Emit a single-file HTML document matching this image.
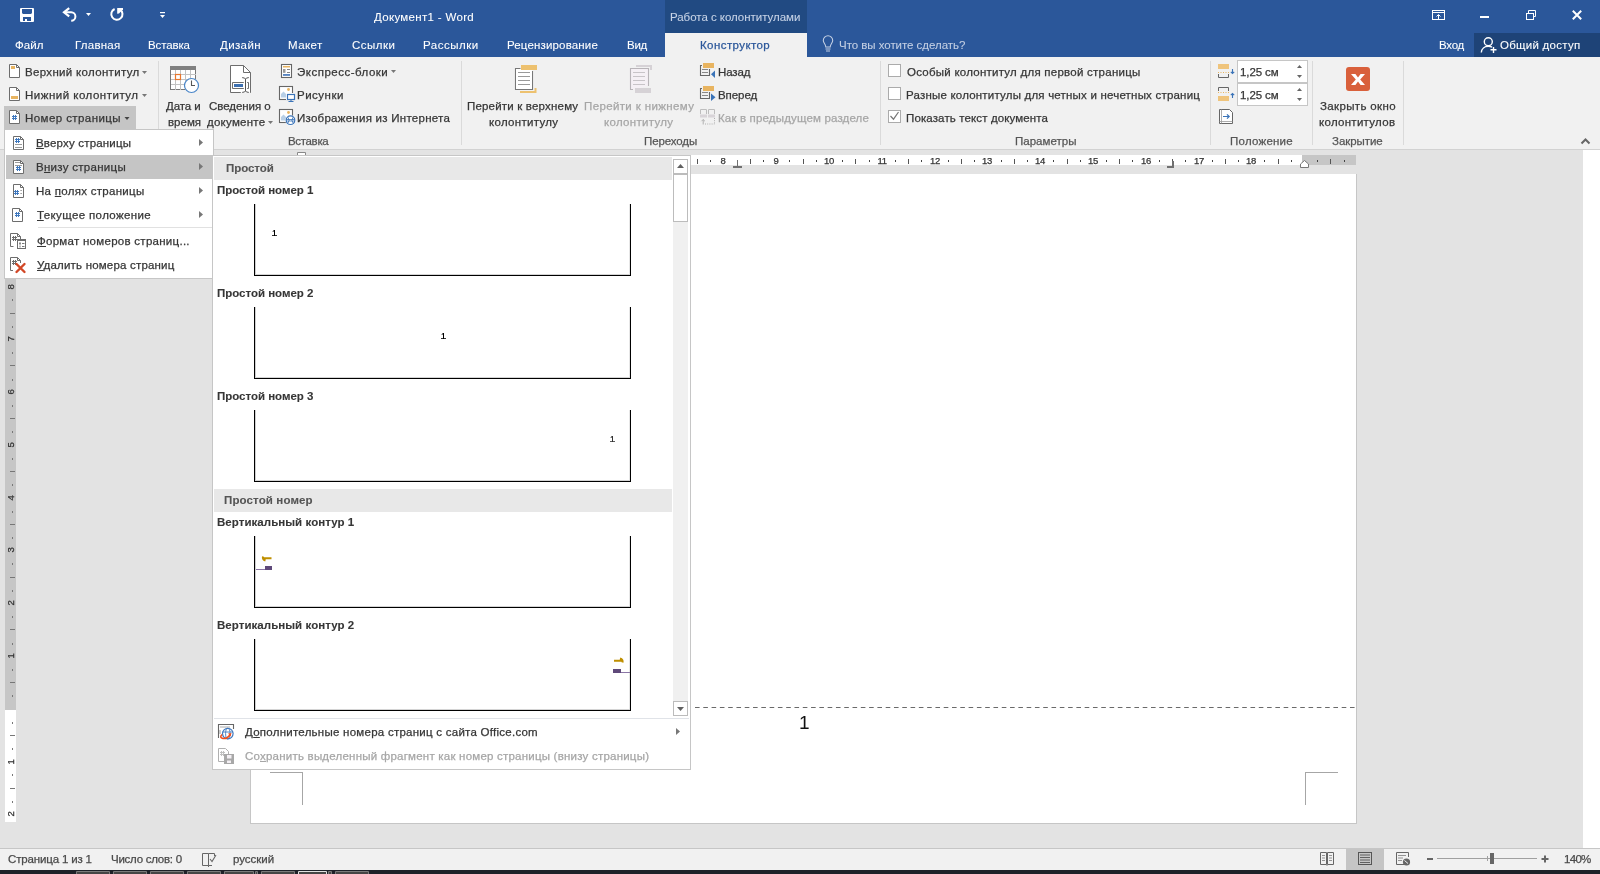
<!DOCTYPE html>
<html><head><meta charset="utf-8"><title>Word</title>
<style>
html,body{margin:0;padding:0;width:1600px;height:874px;overflow:hidden;background:#e3e3e3;}
body{position:relative;font-family:"Liberation Sans",sans-serif;}
.t{position:absolute;white-space:nowrap;font-family:"Liberation Sans",sans-serif;will-change:transform;-webkit-text-stroke:0.25px currentColor;}
.r{position:absolute;display:block;}
u{text-decoration:underline;text-underline-offset:1px;}
</style></head><body>
<div class="r" style="left:0px;top:0px;width:1600px;height:57px;background:#2b579a;"></div>
<div class="r" style="left:665px;top:0px;width:142px;height:33px;background:#214a82;"></div>
<div class="r" style="left:665px;top:33px;width:142px;height:24px;background:#f1f1f1;"></div>
<div class="r" style="left:1474px;top:33px;width:126px;height:24px;background:#1e4377;"></div>
<div class="t" style="left:374px;top:10.0px;color:#fff;font-size:11.5px;line-height:14px;letter-spacing:0.32px;-webkit-text-stroke:0.08px currentColor;">Документ1 - Word</div>
<div class="t" style="left:670.4px;top:10.0px;color:#c7d3e6;font-size:11.5px;line-height:14px;letter-spacing:-0.033px;-webkit-text-stroke:0.08px currentColor;">Работа с колонтитулами</div>
<div class="t" style="left:15.25px;top:38.0px;color:#fff;font-size:11.5px;line-height:14px;letter-spacing:0.083px;-webkit-text-stroke:0.08px currentColor;">Файл</div>
<div class="t" style="left:75px;top:38.0px;color:#fff;font-size:11.5px;line-height:14px;letter-spacing:0.233px;-webkit-text-stroke:0.08px currentColor;">Главная</div>
<div class="t" style="left:148.4px;top:38.0px;color:#fff;font-size:11.5px;line-height:14px;letter-spacing:-0.133px;-webkit-text-stroke:0.08px currentColor;">Вставка</div>
<div class="t" style="left:219.7px;top:38.0px;color:#fff;font-size:11.5px;line-height:14px;letter-spacing:0.38px;-webkit-text-stroke:0.08px currentColor;">Дизайн</div>
<div class="t" style="left:288px;top:38.0px;color:#fff;font-size:11.5px;line-height:14px;letter-spacing:0.45px;-webkit-text-stroke:0.08px currentColor;">Макет</div>
<div class="t" style="left:352px;top:38.0px;color:#fff;font-size:11.5px;line-height:14px;letter-spacing:0.5px;-webkit-text-stroke:0.08px currentColor;">Ссылки</div>
<div class="t" style="left:423px;top:38.0px;color:#fff;font-size:11.5px;line-height:14px;letter-spacing:0.5px;-webkit-text-stroke:0.08px currentColor;">Рассылки</div>
<div class="t" style="left:506.6px;top:38.0px;color:#fff;font-size:11.5px;line-height:14px;letter-spacing:0.154px;-webkit-text-stroke:0.08px currentColor;">Рецензирование</div>
<div class="t" style="left:626.9px;top:38.0px;color:#fff;font-size:11.5px;line-height:14px;letter-spacing:-0.25px;-webkit-text-stroke:0.08px currentColor;">Вид</div>
<div class="t" style="left:699.6px;top:38.0px;color:#2b579a;font-size:11.5px;line-height:14px;letter-spacing:0.42px;">Конструктор</div>
<div class="t" style="left:838.8px;top:38.0px;color:#c3cfe3;font-size:11.5px;line-height:14px;letter-spacing:-0.038px;-webkit-text-stroke:0.08px currentColor;">Что вы хотите сделать?</div>
<div class="t" style="left:1438.7px;top:38.0px;color:#fff;font-size:11.5px;line-height:14px;letter-spacing:-0.267px;-webkit-text-stroke:0.08px currentColor;">Вход</div>
<div class="t" style="left:1500.4px;top:38.0px;color:#fff;font-size:11.5px;line-height:14px;letter-spacing:0.264px;-webkit-text-stroke:0.08px currentColor;">Общий доступ</div>
<div class="r" style="left:0px;top:57px;width:1600px;height:92px;background:#f1f1f1;"></div>
<div class="r" style="left:0px;top:149px;width:1600px;height:1px;background:#d2d2d2;"></div>
<div class="r" style="left:158px;top:61px;width:1px;height:84px;background:#dadada;"></div>
<div class="r" style="left:461px;top:61px;width:1px;height:84px;background:#dadada;"></div>
<div class="r" style="left:880px;top:61px;width:1px;height:84px;background:#dadada;"></div>
<div class="r" style="left:1210px;top:61px;width:1px;height:84px;background:#dadada;"></div>
<div class="r" style="left:1312px;top:61px;width:1px;height:84px;background:#dadada;"></div>
<div class="r" style="left:1403px;top:61px;width:1px;height:84px;background:#dadada;"></div>
<div class="r" style="left:4px;top:106px;width:132px;height:24px;background:#c5c5c5;"></div>
<div class="t" style="left:25.2px;top:65.0px;color:#363636;font-size:11.5px;line-height:14px;letter-spacing:0.324px;">Верхний колонтитул</div>
<div class="t" style="left:25.2px;top:88.0px;color:#363636;font-size:11.5px;line-height:14px;letter-spacing:0.5px;">Нижний колонтитул</div>
<div class="t" style="left:25.25px;top:111.0px;color:#363636;font-size:11.5px;line-height:14px;letter-spacing:0.423px;">Номер страницы</div>
<div class="t" style="left:166px;top:99.0px;color:#363636;font-size:11.5px;line-height:14px;letter-spacing:-0.08px;">Дата и</div>
<div class="t" style="left:167.6px;top:115.0px;color:#363636;font-size:11.5px;line-height:14px;">время</div>
<div class="t" style="left:209.4px;top:99.0px;color:#363636;font-size:11.5px;line-height:14px;letter-spacing:-0.044px;">Сведения о</div>
<div class="t" style="left:207px;top:115.0px;color:#363636;font-size:11.5px;line-height:14px;letter-spacing:0.25px;">документе</div>
<div class="t" style="left:297px;top:65.0px;color:#363636;font-size:11.5px;line-height:14px;letter-spacing:0.5px;">Экспресс-блоки</div>
<div class="t" style="left:297.4px;top:88.0px;color:#363636;font-size:11.5px;line-height:14px;letter-spacing:0.5px;">Рисунки</div>
<div class="t" style="left:297px;top:111.0px;color:#363636;font-size:11.5px;line-height:14px;letter-spacing:0.261px;">Изображения из Интернета</div>
<div class="t" style="left:288.4px;top:134.0px;color:#555;font-size:11.5px;line-height:14px;letter-spacing:-0.333px;">Вставка</div>
<div class="t" style="left:467.4px;top:99.0px;color:#363636;font-size:11.5px;line-height:14px;letter-spacing:0.188px;">Перейти к верхнему</div>
<div class="t" style="left:489.4px;top:115.0px;color:#363636;font-size:11.5px;line-height:14px;letter-spacing:0.3px;">колонтитулу</div>
<div class="t" style="left:583.7px;top:99.0px;color:#a6a6a6;font-size:11.5px;line-height:14px;letter-spacing:0.369px;">Перейти к нижнему</div>
<div class="t" style="left:604px;top:115.0px;color:#a6a6a6;font-size:11.5px;line-height:14px;letter-spacing:0.3px;">колонтитулу</div>
<div class="t" style="left:718.3px;top:65.0px;color:#363636;font-size:11.5px;line-height:14px;letter-spacing:-0.125px;">Назад</div>
<div class="t" style="left:718.3px;top:88.0px;color:#363636;font-size:11.5px;line-height:14px;letter-spacing:-0.06px;">Вперед</div>
<div class="t" style="left:718.3px;top:111.0px;color:#a6a6a6;font-size:11.5px;line-height:14px;letter-spacing:0.161px;">Как в предыдущем разделе</div>
<div class="t" style="left:643.5px;top:134.0px;color:#555;font-size:11.5px;line-height:14px;letter-spacing:-0.114px;">Переходы</div>
<div class="r" style="left:888px;top:64px;width:13px;height:13px;background:#fff;border:1px solid #ababab;box-sizing:border-box;"></div>
<div class="r" style="left:888px;top:87px;width:13px;height:13px;background:#fff;border:1px solid #ababab;box-sizing:border-box;"></div>
<div class="r" style="left:888px;top:110px;width:13px;height:13px;background:#fff;border:1px solid #ababab;box-sizing:border-box;"></div>
<div class="t" style="left:906.5px;top:65.0px;color:#363636;font-size:11.5px;line-height:14px;letter-spacing:0.247px;">Особый колонтитул для первой страницы</div>
<div class="t" style="left:905.5px;top:88.0px;color:#363636;font-size:11.5px;line-height:14px;letter-spacing:0.202px;">Разные колонтитулы для четных и нечетных страниц</div>
<div class="t" style="left:905.5px;top:111.0px;color:#363636;font-size:11.5px;line-height:14px;letter-spacing:0.126px;">Показать текст документа</div>
<div class="t" style="left:1014.6px;top:134.0px;color:#555;font-size:11.5px;line-height:14px;letter-spacing:0.013px;">Параметры</div>
<div class="r" style="left:1237px;top:60px;width:71px;height:23px;background:#fff;border:1px solid #c6c6c6;box-sizing:border-box;"></div>
<div class="r" style="left:1237px;top:83px;width:71px;height:23px;background:#fff;border:1px solid #c6c6c6;box-sizing:border-box;"></div>
<div class="t" style="left:1240px;top:65.0px;color:#363636;font-size:11.5px;line-height:14px;letter-spacing:-0.1px;">1,25 см</div>
<div class="t" style="left:1240px;top:88.0px;color:#363636;font-size:11.5px;line-height:14px;letter-spacing:-0.1px;">1,25 см</div>
<div class="t" style="left:1229.5px;top:134.0px;color:#555;font-size:11.5px;line-height:14px;letter-spacing:0.237px;">Положение</div>
<div class="r" style="left:1346px;top:67px;width:24px;height:24px;background:#d9603b;border-radius:3px;"></div>
<div class="t" style="left:1319.6px;top:99.0px;color:#363636;font-size:11.5px;line-height:14px;letter-spacing:0.355px;">Закрыть окно</div>
<div class="t" style="left:1319.3px;top:115.0px;color:#363636;font-size:11.5px;line-height:14px;letter-spacing:0.291px;">колонтитулов</div>
<div class="t" style="left:1332px;top:134.0px;color:#555;font-size:11.5px;line-height:14px;letter-spacing:-0.057px;">Закрытие</div>
<div class="r" style="left:0px;top:150px;width:1583px;height:698px;background:#e3e3e3;"></div>
<div class="r" style="left:1583px;top:150px;width:17px;height:698px;background:#fff;"></div>
<div class="r" style="left:250px;top:174px;width:1107px;height:650px;background:#fff;border:1px solid #c6c6c6;border-top:none;box-sizing:border-box;"></div>
<div class="r" style="left:250px;top:155px;width:1106px;height:10px;background:#fff;"></div>
<div class="r" style="left:1302px;top:155px;width:54px;height:10px;background:#c6c6c6;"></div>
<div class="r" style="left:5px;top:150px;width:11px;height:560px;background:#c6c6c6;"></div>
<div class="r" style="left:5px;top:710px;width:11px;height:112px;background:#fff;"></div>
<svg class="r" style="left:0;top:0" width="1600" height="874"><path d="M695 707.5H1355" stroke="#6a6a6a" stroke-width="1" stroke-dasharray="4.6 3.691"/></svg><div class="t" style="left:799px;top:711.0px;color:#111;font-size:19px;line-height:23px;-webkit-text-stroke:0;">1</div>
<div class="r" style="left:270px;top:772px;width:33px;height:1px;background:#a6a6a6;"></div>
<div class="r" style="left:302px;top:772px;width:1px;height:33px;background:#a6a6a6;"></div>
<div class="r" style="left:1305px;top:772px;width:33px;height:1px;background:#a6a6a6;"></div>
<div class="r" style="left:1305px;top:772px;width:1px;height:33px;background:#a6a6a6;"></div>
<div class="t" style="left:708.4px;top:153.5px;width:30px;text-align:center;font-size:9.5px;line-height:14px;color:#333;letter-spacing:-0.4px">8</div>
<div class="t" style="left:761.2px;top:153.5px;width:30px;text-align:center;font-size:9.5px;line-height:14px;color:#333;letter-spacing:-0.4px">9</div>
<div class="t" style="left:814.0px;top:153.5px;width:30px;text-align:center;font-size:9.5px;line-height:14px;color:#333;letter-spacing:-0.4px">10</div>
<div class="t" style="left:866.8px;top:153.5px;width:30px;text-align:center;font-size:9.5px;line-height:14px;color:#333;letter-spacing:-0.4px">11</div>
<div class="t" style="left:919.6px;top:153.5px;width:30px;text-align:center;font-size:9.5px;line-height:14px;color:#333;letter-spacing:-0.4px">12</div>
<div class="t" style="left:972.3px;top:153.5px;width:30px;text-align:center;font-size:9.5px;line-height:14px;color:#333;letter-spacing:-0.4px">13</div>
<div class="t" style="left:1025.1px;top:153.5px;width:30px;text-align:center;font-size:9.5px;line-height:14px;color:#333;letter-spacing:-0.4px">14</div>
<div class="t" style="left:1077.9px;top:153.5px;width:30px;text-align:center;font-size:9.5px;line-height:14px;color:#333;letter-spacing:-0.4px">15</div>
<div class="t" style="left:1130.7px;top:153.5px;width:30px;text-align:center;font-size:9.5px;line-height:14px;color:#333;letter-spacing:-0.4px">16</div>
<div class="t" style="left:1183.5px;top:153.5px;width:30px;text-align:center;font-size:9.5px;line-height:14px;color:#333;letter-spacing:-0.4px">17</div>
<div class="t" style="left:1236.2px;top:153.5px;width:30px;text-align:center;font-size:9.5px;line-height:14px;color:#333;letter-spacing:-0.4px">18</div>
<div class="t" style="left:-4px;top:279.5px;width:30px;text-align:center;font-size:9.5px;line-height:14px;color:#333;transform:rotate(-90deg);letter-spacing:-0.4px">8</div>
<div class="t" style="left:-4px;top:332.2px;width:30px;text-align:center;font-size:9.5px;line-height:14px;color:#333;transform:rotate(-90deg);letter-spacing:-0.4px">7</div>
<div class="t" style="left:-4px;top:385.0px;width:30px;text-align:center;font-size:9.5px;line-height:14px;color:#333;transform:rotate(-90deg);letter-spacing:-0.4px">6</div>
<div class="t" style="left:-4px;top:437.8px;width:30px;text-align:center;font-size:9.5px;line-height:14px;color:#333;transform:rotate(-90deg);letter-spacing:-0.4px">5</div>
<div class="t" style="left:-4px;top:490.6px;width:30px;text-align:center;font-size:9.5px;line-height:14px;color:#333;transform:rotate(-90deg);letter-spacing:-0.4px">4</div>
<div class="t" style="left:-4px;top:543.4px;width:30px;text-align:center;font-size:9.5px;line-height:14px;color:#333;transform:rotate(-90deg);letter-spacing:-0.4px">3</div>
<div class="t" style="left:-4px;top:596.1px;width:30px;text-align:center;font-size:9.5px;line-height:14px;color:#333;transform:rotate(-90deg);letter-spacing:-0.4px">2</div>
<div class="t" style="left:-4px;top:648.9px;width:30px;text-align:center;font-size:9.5px;line-height:14px;color:#333;transform:rotate(-90deg);letter-spacing:-0.4px">1</div>
<div class="t" style="left:-4px;top:754.5px;width:30px;text-align:center;font-size:9.5px;line-height:14px;color:#333;transform:rotate(-90deg);letter-spacing:-0.4px">1</div>
<div class="t" style="left:-4px;top:807.3px;width:30px;text-align:center;font-size:9.5px;line-height:14px;color:#333;transform:rotate(-90deg);letter-spacing:-0.4px">2</div>
<svg class="r" style="left:0;top:0" width="1600" height="874" viewBox="0 0 1600 874"><rect x="697" y="159" width="1" height="5" fill="#555"/><rect x="710" y="160" width="1" height="2" fill="#444"/><rect x="737" y="160" width="1" height="2" fill="#444"/><rect x="750" y="159" width="1" height="5" fill="#555"/><rect x="763" y="160" width="1" height="2" fill="#444"/><rect x="789" y="160" width="1" height="2" fill="#444"/><rect x="803" y="159" width="1" height="5" fill="#555"/><rect x="816" y="160" width="1" height="2" fill="#444"/><rect x="842" y="160" width="1" height="2" fill="#444"/><rect x="855" y="159" width="1" height="5" fill="#555"/><rect x="869" y="160" width="1" height="2" fill="#444"/><rect x="895" y="160" width="1" height="2" fill="#444"/><rect x="908" y="159" width="1" height="5" fill="#555"/><rect x="921" y="160" width="1" height="2" fill="#444"/><rect x="948" y="160" width="1" height="2" fill="#444"/><rect x="961" y="159" width="1" height="5" fill="#555"/><rect x="974" y="160" width="1" height="2" fill="#444"/><rect x="1001" y="160" width="1" height="2" fill="#444"/><rect x="1014" y="159" width="1" height="5" fill="#555"/><rect x="1027" y="160" width="1" height="2" fill="#444"/><rect x="1053" y="160" width="1" height="2" fill="#444"/><rect x="1067" y="159" width="1" height="5" fill="#555"/><rect x="1080" y="160" width="1" height="2" fill="#444"/><rect x="1106" y="160" width="1" height="2" fill="#444"/><rect x="1119" y="159" width="1" height="5" fill="#555"/><rect x="1132" y="160" width="1" height="2" fill="#444"/><rect x="1159" y="160" width="1" height="2" fill="#444"/><rect x="1172" y="159" width="1" height="5" fill="#555"/><rect x="1185" y="160" width="1" height="2" fill="#444"/><rect x="1212" y="160" width="1" height="2" fill="#444"/><rect x="1225" y="159" width="1" height="5" fill="#555"/><rect x="1238" y="160" width="1" height="2" fill="#444"/><rect x="1264" y="160" width="1" height="2" fill="#444"/><rect x="1278" y="159" width="1" height="5" fill="#555"/><rect x="1291" y="160" width="1" height="2" fill="#444"/><rect x="1317" y="160" width="1" height="2" fill="#444"/><rect x="1330" y="159" width="1" height="5" fill="#555"/><rect x="1344" y="160" width="1" height="2" fill="#444"/><path d="M737.5 160V167M733 167H742" stroke="#707070" stroke-width="1" fill="none"/><rect x="733" y="166" width="9" height="2" fill="#707070"/><rect x="1172" y="161" width="2" height="6" fill="#707070"/><rect x="1167" y="166" width="7" height="2" fill="#707070"/><path d="M1300.5 167.5V164L1304.5 160.5L1308.5 164V167.5Z" fill="#fff" stroke="#777"/><path d="M297.5 155V152.5H305.5V155" fill="#fff" stroke="#888"/><rect x="12" y="299" width="1" height="2" fill="#777"/><rect x="10" y="313" width="5" height="1" fill="#777"/><rect x="12" y="326" width="1" height="2" fill="#777"/><rect x="12" y="352" width="1" height="2" fill="#777"/><rect x="10" y="365" width="5" height="1" fill="#777"/><rect x="12" y="379" width="1" height="2" fill="#777"/><rect x="12" y="405" width="1" height="2" fill="#777"/><rect x="10" y="418" width="5" height="1" fill="#777"/><rect x="12" y="431" width="1" height="2" fill="#777"/><rect x="12" y="458" width="1" height="2" fill="#777"/><rect x="10" y="471" width="5" height="1" fill="#777"/><rect x="12" y="484" width="1" height="2" fill="#777"/><rect x="12" y="511" width="1" height="2" fill="#777"/><rect x="10" y="524" width="5" height="1" fill="#777"/><rect x="12" y="537" width="1" height="2" fill="#777"/><rect x="12" y="563" width="1" height="2" fill="#777"/><rect x="10" y="577" width="5" height="1" fill="#777"/><rect x="12" y="590" width="1" height="2" fill="#777"/><rect x="12" y="616" width="1" height="2" fill="#777"/><rect x="10" y="629" width="5" height="1" fill="#777"/><rect x="12" y="643" width="1" height="2" fill="#777"/><rect x="12" y="669" width="1" height="2" fill="#777"/><rect x="10" y="682" width="5" height="1" fill="#777"/><rect x="12" y="695" width="1" height="2" fill="#777"/><rect x="12" y="722" width="1" height="2" fill="#777"/><rect x="10" y="735" width="5" height="1" fill="#777"/><rect x="12" y="748" width="1" height="2" fill="#777"/><rect x="12" y="774" width="1" height="2" fill="#777"/><rect x="10" y="788" width="5" height="1" fill="#777"/><rect x="12" y="801" width="1" height="2" fill="#777"/></svg>
<div class="r" style="left:0px;top:848px;width:1600px;height:1px;background:#c6c6c6;"></div>
<div class="r" style="left:0px;top:849px;width:1600px;height:21px;background:#f1f1f1;"></div>
<div class="r" style="left:0px;top:870px;width:1600px;height:4px;background:#1e2128;"></div>
<div class="r" style="left:1346px;top:849px;width:38px;height:21px;background:#c5c5c5;"></div>
<div class="t" style="left:7.5px;top:852.0px;color:#4a4a4a;font-size:11.5px;line-height:14px;letter-spacing:-0.157px;">Страница 1 из 1</div>
<div class="t" style="left:111px;top:852.0px;color:#4a4a4a;font-size:11.5px;line-height:14px;letter-spacing:-0.25px;">Число слов: 0</div>
<div class="t" style="left:233.4px;top:852.0px;color:#4a4a4a;font-size:11.5px;line-height:14px;letter-spacing:-0.017px;">русский</div>
<div class="t" style="left:1563.75px;top:852.0px;color:#4a4a4a;font-size:11.5px;line-height:14px;letter-spacing:-0.7px;">140%</div>
<svg class="r" style="left:0;top:0" width="1600" height="874" viewBox="0 0 1600 874"><path d="M202.5 853.5H208.5V865.5H202.5Z" fill="none" stroke="#666"/><path d="M208.5 853.5H214.5V856M208.5 865.5H212M208.5 865.5V867" fill="none" stroke="#666"/><path d="M210 859L212 861.5L216 855" fill="none" stroke="#666" stroke-width="1.1"/><path d="M1320.5 852.5H1326.5V864.5H1320.5Z M1327.5 852.5H1333.5V864.5H1327.5Z" fill="none" stroke="#666"/><path d="M1322 855.5H1325M1322 858H1325M1322 860.5H1325M1329 855.5H1332M1329 858H1332M1329 860.5H1332M1327 864V866" stroke="#888" stroke-width=".9"/><rect x="1358.5" y="852.5" width="13" height="12" fill="none" stroke="#555"/><path d="M1360 855H1370M1360 857.5H1370M1360 860H1370M1360 862.5H1370" stroke="#555" stroke-width=".9"/><path d="M1404 864.5H1396.5V852.5H1408.5V857" fill="none" stroke="#666"/><path d="M1398 855.5H1406M1398 858H1403M1398 860.5H1402" stroke="#888" stroke-width=".9"/><circle cx="1406.5" cy="862" r="3.6" fill="#666"/><path d="M1404.5 860.5L1408 863.5" stroke="#f1f1f1" stroke-width="1"/><rect x="1427" y="858" width="6" height="2" fill="#666"/><rect x="1437" y="858" width="100" height="1" fill="#a0a0a0"/><rect x="1487" y="856" width="1" height="5" fill="#a0a0a0"/><rect x="1490" y="853" width="4" height="11" fill="#666"/><path d="M1541.5 859H1548.5M1545 855.5V862.5" stroke="#666" stroke-width="2"/><path d="M76.5 874V871.5H109.5V874" fill="#454545" stroke="#7a7a7a"/><path d="M113.5 874V871.5H146.5V874" fill="#454545" stroke="#7a7a7a"/><path d="M150.5 874V871.5H183.5V874" fill="#454545" stroke="#7a7a7a"/><path d="M187.5 874V871.5H220.5V874" fill="#454545" stroke="#7a7a7a"/><path d="M224.5 874V871.5H253.5V874" fill="#454545" stroke="#7a7a7a"/><path d="M261.5 874V871.5H294.5V874" fill="#454545" stroke="#7a7a7a"/><path d="M298.5 874V871.5H326.5V874" fill="#454545" stroke="#e0e0e0"/><path d="M335.5 874V871.5H368.5V874" fill="#454545" stroke="#7a7a7a"/><path d="M255.5 874V871.5H257.5V874M328.5 874V871.5H331.5V874" fill="#454545" stroke="#7a7a7a"/></svg>
<div class="r" style="left:4px;top:129px;width:210px;height:150px;background:#fff;border:1px solid #c6c6c6;box-sizing:border-box;"></div>
<div class="r" style="left:6px;top:155px;width:206px;height:24px;background:#c5c5c5;"></div>
<div class="t" style="left:36.1px;top:136.0px;color:#363636;font-size:11.5px;line-height:14px;letter-spacing:0.179px;"><u>В</u>верху страницы</div>
<div class="t" style="left:36.1px;top:160.0px;color:#363636;font-size:11.5px;line-height:14px;letter-spacing:0.285px;">В<u>н</u>изу страницы</div>
<div class="t" style="left:36.1px;top:184.0px;color:#363636;font-size:11.5px;line-height:14px;letter-spacing:0.287px;">На <u>п</u>олях страницы</div>
<div class="t" style="left:37px;top:208.0px;color:#363636;font-size:11.5px;line-height:14px;letter-spacing:0.375px;"><u>Т</u>екущее положение</div>
<div class="t" style="left:37px;top:234.0px;color:#363636;font-size:11.5px;line-height:14px;letter-spacing:0.275px;"><u>Ф</u>ормат номеров страниц...</div>
<div class="t" style="left:37px;top:258.0px;color:#363636;font-size:11.5px;line-height:14px;letter-spacing:0.19px;"><u>У</u>далить номера страниц</div>
<div class="r" style="left:38px;top:227px;width:174px;height:1px;background:#e1e1e1;"></div>
<svg class="r" style="left:0;top:0" width="1600" height="874" viewBox="0 0 1600 874"><path d="M13.5 136.5H20.5L23.5 139.5V149.5H13.5Z" fill="#fff" stroke="#6d6d6d"/><path d="M20.5 136.5V139.5H23.5" fill="none" stroke="#6d6d6d"/><rect x="16" y="138" width="1" height="5" fill="#3f78be"/><rect x="18" y="138" width="1" height="5" fill="#3f78be"/><rect x="15" y="139" width="5" height="1" fill="#3f78be"/><rect x="15" y="141" width="5" height="1" fill="#3f78be"/><path d="M15 144.5H22M15 147.5H22" stroke="#9a9a9a" stroke-width="1"/><path d="M13.5 160.5H20.5L23.5 163.5V173.5H13.5Z" fill="#fff" stroke="#6d6d6d"/><path d="M20.5 160.5V163.5H23.5" fill="none" stroke="#6d6d6d"/><path d="M15 162.5H20M15 165.5H22" stroke="#9a9a9a" stroke-width="1"/><rect x="17" y="166" width="1" height="5" fill="#3f78be"/><rect x="19" y="166" width="1" height="5" fill="#3f78be"/><rect x="16" y="167" width="5" height="1" fill="#3f78be"/><rect x="16" y="169" width="5" height="1" fill="#3f78be"/><path d="M13.5 184.5H20.5L23.5 187.5V197.5H13.5Z" fill="#fff" stroke="#6d6d6d"/><path d="M20.5 184.5V187.5H23.5" fill="none" stroke="#6d6d6d"/><rect x="15" y="190" width="1" height="5" fill="#3f78be"/><rect x="17" y="190" width="1" height="5" fill="#3f78be"/><rect x="14" y="191" width="5" height="1" fill="#3f78be"/><rect x="14" y="193" width="5" height="1" fill="#3f78be"/><path d="M20.3 190.5H22M20.3 193.5H22" stroke="#999" stroke-width=".9"/><path d="M12.5 208.5H19.5L22.5 211.5V221.5H12.5Z" fill="#fff" stroke="#6d6d6d"/><path d="M19.5 208.5V211.5H22.5" fill="none" stroke="#6d6d6d"/><rect x="16" y="212" width="1" height="5" fill="#3f78be"/><rect x="18" y="212" width="1" height="5" fill="#3f78be"/><rect x="15" y="213" width="5" height="1" fill="#3f78be"/><rect x="15" y="215" width="5" height="1" fill="#3f78be"/><path d="M13.5 246.5H10.5V233.5H17.5L20.5 236.5V239" fill="none" stroke="#6d6d6d"/><path d="M17.5 233.5V236.5H20.5" fill="none" stroke="#6d6d6d"/><rect x="13" y="236" width="1" height="5" fill="#6d6d6d"/><rect x="15" y="236" width="1" height="5" fill="#6d6d6d"/><rect x="12" y="237" width="5" height="1" fill="#6d6d6d"/><rect x="12" y="239" width="5" height="1" fill="#6d6d6d"/><rect x="17.5" y="239.5" width="8" height="9" fill="#fff" stroke="#6d6d6d"/><rect x="17" y="239" width="9" height="2" fill="#6d6d6d"/><rect x="19" y="242.5" width="2" height="2" fill="#888"/><rect x="19" y="245.5" width="2" height="2" fill="#bbb"/><path d="M22 243.5H24.5M22 246.5H24.5" stroke="#777"/><path d="M13 270.5H10.5V257.5H17.5L20.5 260.5V263" fill="none" stroke="#6d6d6d"/><path d="M17.5 257.5V260.5H20.5" fill="none" stroke="#6d6d6d"/><rect x="13" y="260" width="1" height="5" fill="#6d6d6d"/><rect x="15" y="260" width="1" height="5" fill="#6d6d6d"/><rect x="12" y="261" width="5" height="1" fill="#6d6d6d"/><rect x="12" y="263" width="5" height="1" fill="#6d6d6d"/><path d="M16.5 272L24.5 264M16.5 264L24.5 272" stroke="#d24726" stroke-width="2.4" stroke-linecap="round"/><path d="M199 139V146L203 142.5Z" fill="#777"/><path d="M199 163V170L203 166.5Z" fill="#777"/><path d="M199 187V194L203 190.5Z" fill="#777"/><path d="M199 211V218L203 214.5Z" fill="#777"/></svg>
<div class="r" style="left:212px;top:155px;width:479px;height:615px;background:#fff;border:1px solid #c6c6c6;box-sizing:border-box;"></div>
<div class="r" style="left:214px;top:157px;width:458px;height:23px;background:#e8e8e8;"></div>
<div class="r" style="left:214px;top:489px;width:458px;height:23px;background:#e8e8e8;"></div>
<div class="t" style="left:226.4px;top:161.0px;color:#555;font-size:11.5px;line-height:14px;font-weight:700;letter-spacing:-0.067px;-webkit-text-stroke:0.1px currentColor;">Простой</div>
<div class="t" style="left:223.5px;top:493.0px;color:#555;font-size:11.5px;line-height:14px;font-weight:700;letter-spacing:0.125px;-webkit-text-stroke:0.1px currentColor;">Простой номер</div>
<div class="t" style="left:216.8px;top:183.0px;color:#363636;font-size:11.5px;line-height:14px;font-weight:700;letter-spacing:-0.021px;-webkit-text-stroke:0.1px currentColor;">Простой номер 1</div>
<div class="t" style="left:216.8px;top:286.0px;color:#363636;font-size:11.5px;line-height:14px;font-weight:700;letter-spacing:-0.021px;-webkit-text-stroke:0.1px currentColor;">Простой номер 2</div>
<div class="t" style="left:216.8px;top:389.0px;color:#363636;font-size:11.5px;line-height:14px;font-weight:700;letter-spacing:-0.021px;-webkit-text-stroke:0.1px currentColor;">Простой номер 3</div>
<div class="t" style="left:216.8px;top:515.0px;color:#363636;font-size:11.5px;line-height:14px;font-weight:700;letter-spacing:0.05px;-webkit-text-stroke:0.1px currentColor;">Вертикальный контур 1</div>
<div class="t" style="left:216.8px;top:618.0px;color:#363636;font-size:11.5px;line-height:14px;font-weight:700;letter-spacing:0.05px;-webkit-text-stroke:0.1px currentColor;">Вертикальный контур 2</div>
<div class="r" style="left:255px;top:204px;width:1px;height:71px;background:#cfcfcf;"></div>
<div class="r" style="left:629px;top:204px;width:1px;height:71px;background:#e6e6e6;"></div>
<div class="r" style="left:255px;top:274px;width:375px;height:1px;background:#d4d4d4;"></div>
<div class="r" style="left:254px;top:204px;width:1px;height:72px;background:#000;"></div>
<div class="r" style="left:630px;top:204px;width:1px;height:72px;background:#000;"></div>
<div class="r" style="left:254px;top:275px;width:377px;height:1px;background:#000;"></div>
<div class="r" style="left:255px;top:307px;width:1px;height:71px;background:#cfcfcf;"></div>
<div class="r" style="left:629px;top:307px;width:1px;height:71px;background:#e6e6e6;"></div>
<div class="r" style="left:255px;top:377px;width:375px;height:1px;background:#d4d4d4;"></div>
<div class="r" style="left:254px;top:307px;width:1px;height:72px;background:#000;"></div>
<div class="r" style="left:630px;top:307px;width:1px;height:72px;background:#000;"></div>
<div class="r" style="left:254px;top:378px;width:377px;height:1px;background:#000;"></div>
<div class="r" style="left:255px;top:410px;width:1px;height:71px;background:#cfcfcf;"></div>
<div class="r" style="left:629px;top:410px;width:1px;height:71px;background:#e6e6e6;"></div>
<div class="r" style="left:255px;top:480px;width:375px;height:1px;background:#d4d4d4;"></div>
<div class="r" style="left:254px;top:410px;width:1px;height:72px;background:#000;"></div>
<div class="r" style="left:630px;top:410px;width:1px;height:72px;background:#000;"></div>
<div class="r" style="left:254px;top:481px;width:377px;height:1px;background:#000;"></div>
<div class="r" style="left:255px;top:536px;width:1px;height:71px;background:#cfcfcf;"></div>
<div class="r" style="left:629px;top:536px;width:1px;height:71px;background:#e6e6e6;"></div>
<div class="r" style="left:255px;top:606px;width:375px;height:1px;background:#d4d4d4;"></div>
<div class="r" style="left:254px;top:536px;width:1px;height:72px;background:#000;"></div>
<div class="r" style="left:630px;top:536px;width:1px;height:72px;background:#000;"></div>
<div class="r" style="left:254px;top:607px;width:377px;height:1px;background:#000;"></div>
<div class="r" style="left:255px;top:639px;width:1px;height:71px;background:#cfcfcf;"></div>
<div class="r" style="left:629px;top:639px;width:1px;height:71px;background:#e6e6e6;"></div>
<div class="r" style="left:255px;top:709px;width:375px;height:1px;background:#d4d4d4;"></div>
<div class="r" style="left:254px;top:639px;width:1px;height:72px;background:#000;"></div>
<div class="r" style="left:630px;top:639px;width:1px;height:72px;background:#000;"></div>
<div class="r" style="left:254px;top:710px;width:377px;height:1px;background:#000;"></div>
<div class="r" style="left:214px;top:718px;width:475px;height:1px;background:#e0e3e8;"></div>
<div class="t" style="left:245.2px;top:725.0px;color:#363636;font-size:11.5px;line-height:14px;letter-spacing:0.255px;">Д<u>о</u>полнительные номера страниц с сайта Office.com</div>
<div class="t" style="left:245.2px;top:749.0px;color:#a6a6a6;font-size:11.5px;line-height:14px;letter-spacing:0.219px;">Со<u>х</u>ранить выделенный фрагмент как номер страницы (внизу страницы)</div>
<div class="r" style="left:673px;top:159px;width:15px;height:557px;background:#f0f0f0;"></div>
<div class="r" style="left:673px;top:159px;width:15px;height:15px;background:#fff;border:1px solid #bcbcbc;box-sizing:border-box;"></div>
<div class="r" style="left:673px;top:174px;width:15px;height:48px;background:#fff;border:1px solid #bcbcbc;box-sizing:border-box;"></div>
<div class="r" style="left:673px;top:701px;width:15px;height:15px;background:#fff;border:1px solid #bcbcbc;box-sizing:border-box;"></div>
<svg class="r" style="left:0;top:0" width="1600" height="874" viewBox="0 0 1600 874"><rect x="274" y="230" width="1" height="6" fill="#000"/><rect x="273" y="230" width="1" height="2" fill="#777"/><rect x="272" y="231" width="1" height="1" fill="#bbb"/><rect x="272" y="235" width="5" height="1" fill="#000" opacity=".8"/><rect x="443" y="333" width="1" height="6" fill="#000"/><rect x="442" y="333" width="1" height="2" fill="#777"/><rect x="441" y="334" width="1" height="1" fill="#bbb"/><rect x="441" y="338" width="5" height="1" fill="#000" opacity=".8"/><rect x="612" y="436" width="1" height="6" fill="#333"/><rect x="611" y="436" width="1" height="2" fill="#777"/><rect x="610" y="437" width="1" height="1" fill="#bbb"/><rect x="610" y="441" width="5" height="1" fill="#333" opacity=".8"/></svg>
<svg class="r" style="left:0;top:0" width="1600" height="874" viewBox="0 0 1600 874"><path d="M262.5 558.2H271.5M263 556.5Q262.3 559.5 265.5 560.5" stroke="#bf8f00" stroke-width="2" fill="none"/><rect x="265" y="566" width="7" height="4" fill="#5f497a"/><rect x="256" y="569" width="9" height="1" fill="#8b76a6"/><path d="M614 660.8H623M622.5 662.5Q623.2 659.5 620 658.5" stroke="#bf8f00" stroke-width="2" fill="none"/><rect x="613" y="669" width="8" height="4" fill="#5f497a"/><rect x="621" y="672" width="9" height="1" fill="#8b76a6"/><path d="M677 168H684L680.5 164Z" fill="#606060"/><path d="M677 707H684L680.5 711Z" fill="#606060"/><path d="M676 728V735L680 731.5Z" fill="#777"/><path d="M218.5 738V724.5H233.5V729" fill="none" stroke="#666" stroke-width="1.1"/><path d="M220 727H230M220 730V734" stroke="#aaa" stroke-width="1.2"/><circle cx="227.8" cy="733.6" r="5.3" fill="#fff" stroke="#3f78be" stroke-width="1.2"/><ellipse cx="227.8" cy="733.6" rx="2.2" ry="5.3" fill="none" stroke="#3f78be" stroke-width=".9"/><path d="M222.5 732H233" stroke="#3f78be" stroke-width=".9"/><path d="M222 734.5Q219 737.5 223 738.5Q227 739 230 735" fill="none" stroke="#f0501e" stroke-width="1.6"/><path d="M228 733.5L231.5 733L230.5 736.5Z" fill="#f0501e"/><path d="M224 761.5H218.5V748.5H225.5L228.5 751.5V754" fill="none" stroke="#b0b0b0"/><rect x="221" y="751" width="1" height="5" fill="#c0c0c0"/><rect x="223" y="751" width="1" height="5" fill="#c0c0c0"/><rect x="220" y="752" width="5" height="1" fill="#c0c0c0"/><rect x="220" y="754" width="5" height="1" fill="#c0c0c0"/><rect x="224" y="754" width="10" height="10" fill="#a8a8a8"/><rect x="227" y="755" width="4.5" height="3.5" fill="#f4f0f4"/><rect x="227" y="760.5" width="4" height="2.5" fill="#f4f0f4"/></svg>
<svg class="r" style="left:0;top:0" width="1600" height="874" viewBox="0 0 1600 874"><rect x="20" y="8" width="14" height="14" rx="1" fill="#fff"/><path d="M22 9H32V13L31 14H23L22 13Z" fill="#2b579a"/><path d="M23 17H31V21H27V19H25V21H23Z" fill="#2b579a"/><path d="M64.5 12.3H71.2A4.2 4.2 0 0 1 71.2 20.7" fill="none" stroke="#fff" stroke-width="2"/><path d="M69.2 8.2L64 12.3L69.2 16.4" fill="none" stroke="#fff" stroke-width="2.2" stroke-linejoin="miter"/><path d="M86 13H91L88.5 16Z" fill="#fff"/><path d="M114.6 9A5.6 5.6 0 1 0 120.2 9.6" fill="none" stroke="#fff" stroke-width="2"/><path d="M117.2 8H123V9.2L119 13.5L117.2 13.7Z" fill="#fff"/><rect x="160" y="12" width="5" height="1.2" fill="#fff"/><path d="M160 15H165L162.5 18Z" fill="#fff"/><rect x="1432.5" y="10.5" width="12" height="9" fill="none" stroke="#fff"/><path d="M1432 12.5H1445" stroke="#fff"/><path d="M1438.5 19V15M1436.5 16.5L1438.5 14.5L1440.5 16.5" stroke="#fff" fill="none"/><rect x="1480" y="16" width="9" height="2" fill="#fff"/><rect x="1526.5" y="13.5" width="7" height="6" fill="none" stroke="#fff"/><path d="M1528.5 13.5V10.5H1535.5V16.5H1533.5" fill="none" stroke="#fff"/><path d="M1572.8 10.8L1581.2 19.2M1581.2 10.8L1572.8 19.2" stroke="#fff" stroke-width="2"/><path d="M825.8 47C825.8 44 823.3 43 823.3 40.5A4.7 4.7 0 0 1 832.7 40.5C832.7 43 830.2 44 830.2 47Z" fill="none" stroke="#c3cfe3" stroke-width="1.1"/><path d="M825.5 49H830.5M826 51H830" stroke="#c3cfe3" stroke-width="1.1"/><circle cx="1488.3" cy="41.7" r="4" fill="none" stroke="#fff" stroke-width="1.4"/><path d="M1481.3 52.5C1481.6 48.7 1484.5 46.3 1488.3 46.3C1489.8 46.3 1491 46.6 1492 47.2" fill="none" stroke="#fff" stroke-width="1.4"/><path d="M1490.5 49.8H1496.5M1493.5 47V53" stroke="#fff" stroke-width="1.4"/><path d="M9.5 64.5H16.5L19.5 67.5V77.5H9.5Z" fill="#fff" stroke="#6d6d6d"/><path d="M16.5 64.5V67.5H19.5" fill="none" stroke="#6d6d6d"/><rect x="11" y="66" width="4" height="3" fill="#e8b460"/><path d="M9.5 87.5H16.5L19.5 90.5V100.5H9.5Z" fill="#fff" stroke="#6d6d6d"/><path d="M16.5 87.5V90.5H19.5" fill="none" stroke="#6d6d6d"/><rect x="11" y="96" width="7" height="3" fill="#e8b460"/><path d="M9.5 110.5H16.5L19.5 113.5V123.5H9.5Z" fill="#fff" stroke="#6d6d6d"/><path d="M16.5 110.5V113.5H19.5" fill="none" stroke="#6d6d6d"/><rect x="13" y="115" width="1" height="5" fill="#3f78be"/><rect x="15" y="115" width="1" height="5" fill="#3f78be"/><rect x="12" y="116" width="5" height="1" fill="#3f78be"/><rect x="12" y="118" width="5" height="1" fill="#3f78be"/><path d="M142 71H147L144.5 74Z" fill="#777"/><path d="M142 94H147L144.5 97Z" fill="#777"/><path d="M124.5 117H129.5L127 120Z" fill="#444"/><rect x="170.5" y="66.5" width="25" height="23" fill="#fff" stroke="#777"/><rect x="170" y="66" width="26" height="4" fill="#808080"/><path d="M175.5 70V90M180.5 70V90M185.5 70V90M190.5 70V90M171 74.5H196M171 79.5H196M171 84.5H196" stroke="#c2c2c2"/><rect x="175.5" y="74.5" width="5" height="5" fill="#fff" stroke="#e8772e" stroke-width="1.2"/><circle cx="191.5" cy="85.5" r="7" fill="#fff" stroke="#4a86c8" stroke-width="1.2"/><path d="M191.5 80.5V85.5H195" fill="none" stroke="#555" stroke-width="1.1"/><path d="M243.5 65.5H230.5V92.5H250.5V72.5Z" fill="#fff"/><path d="M240.8 92.5H230.5V65.5H243.5L250.5 72.5V92.8M243.5 65.5V72.5H250.5" fill="none" stroke="#6d6d6d"/><path d="M243.8 82.5H232.5V88.5H243.8" fill="none" stroke="#6d6d6d"/><rect x="234" y="84" width="9" height="3" fill="#3c6fb0"/><path d="M245.5 78.5V91.5M242.2 77.6Q244.6 77.6 245.5 79.2Q246.4 77.6 248.8 77.6M242.2 92.4Q244.6 92.4 245.5 90.8Q246.4 92.4 248.8 92.4" fill="none" stroke="#555" stroke-width="1"/><path d="M247.2 82.5H248.5V88.5H247.2" fill="none" stroke="#6d6d6d"/><path d="M268 121H273L270.5 124Z" fill="#777"/><rect x="281.5" y="64.5" width="10" height="13" fill="#fff" stroke="#666" stroke-width="1.1"/><rect x="283" y="66" width="7" height="1.5" fill="#e8b460"/><rect x="283" y="69" width="2.5" height="3.8" fill="#999"/><path d="M287 69.5H290M287 72.5H290" stroke="#777" stroke-width="0.9"/><rect x="283" y="74.2" width="7" height="1.5" fill="#2e67b1"/><path d="M391 70H396L393.5 73Z" fill="#777"/><rect x="279.5" y="86.5" width="13" height="13" fill="#fff" stroke="#666" stroke-width="1.1"/><circle cx="288.5" cy="89.5" r="1.4" fill="#e8b460"/><path d="M281 97.5V94L283.5 91.5L286 94V97.5Z" fill="#b8cfe6"/><rect x="286" y="93" width="7.5" height="7" fill="#fff"/><rect x="287.5" y="94.5" width="7" height="5" fill="#fff" stroke="#3a73b8" stroke-width="1.2"/><path d="M291 100V101M288.5 101.5H293.5" stroke="#3a73b8" stroke-width="1.1"/><rect x="279.5" y="109.5" width="13" height="13" fill="#fff" stroke="#666" stroke-width="1.1"/><circle cx="288.5" cy="112.5" r="1.4" fill="#e8b460"/><path d="M281 120.5V117L283.5 114.5L286 117V120.5Z" fill="#b8cfe6"/><circle cx="290.5" cy="120.2" r="5.2" fill="#fff"/><circle cx="290.5" cy="120.2" r="4.3" fill="#fff" stroke="#3a73b8" stroke-width="1.2"/><path d="M287.8 117.2Q290.5 120.2 287.8 123.2M293.2 117.2Q290.5 120.2 293.2 123.2" fill="none" stroke="#3a73b8" stroke-width=".9"/><path d="M286.5 119.5H294.5M286.5 121H294.5" stroke="#3a73b8" stroke-width=".8"/><path d="M520.5 68.5H515.5V89.5H532.5V71" fill="#fff" stroke="#777" stroke-width="1.1"/><rect x="516" y="69" width="16" height="20" fill="#fff"/><path d="M518 72.5H530M518 76.5H530M518 80.5H530M518 84.5H530" stroke="#9a9a9a"/><rect x="521" y="65" width="16" height="5" fill="#edc16f"/><path d="M520 92H535.5V88" fill="none" stroke="#edc16f" stroke-width="2"/><path d="M633 89.5H630.5V68.5H648.5V86" fill="#f5f0f5" stroke="#b8b4b8" stroke-width="1.1"/><path d="M633 72.5H645M633 76.5H645M633 80.5H645M633 84.5H645" stroke="#c8c4c8"/><path d="M636 66H651V70" fill="none" stroke="#d6d2d6" stroke-width="2"/><rect x="635" y="88" width="16" height="5" fill="#d6d2d6"/><rect x="703" y="63" width="11" height="5" fill="#e8b460"/><path d="M702 65.5H700.5V75.5H709.5V69" fill="none" stroke="#666" stroke-width="1.1"/><path d="M702 69.5H708M702 72.5H708" stroke="#888"/><path d="M715 70.5V78L711 74.3Z" fill="#3a73b8"/><rect x="703" y="86" width="11" height="5" fill="#e8b460"/><path d="M702 88.5H700.5V98.5H709.5V92" fill="none" stroke="#666" stroke-width="1.1"/><path d="M702 92.5H708M702 95.5H708" stroke="#888"/><path d="M711 93.5V101L715.5 97.3Z" fill="#3a73b8"/><path d="M700.5 114V109.5H706.5V114M708.5 114V109.5H714.5V114" fill="none" stroke="#bdbdbd"/><rect x="700" y="114.5" width="7" height="3" fill="#d8d4d8"/><rect x="708" y="114.5" width="7" height="3" fill="#d8d4d8"/><path d="M703.2 124.5V119.5M701.5 121.2L703.2 119.5L704.9 121.2" fill="none" stroke="#b0b0b0"/><path d="M705 124H714.5M714.5 118V124" stroke="#b0b0b0" stroke-dasharray="1 1.2"/><path d="M890.5 116L893.5 119.2L898.5 112" fill="none" stroke="#777" stroke-width="1.2"/><rect x="1218" y="64" width="11" height="5" fill="#efc47c"/><path d="M1218 72.5H1229" stroke="#e8b460" stroke-dasharray="1 1.5"/><path d="M1218.5 74V77.5H1228.5V74" fill="none" stroke="#666"/><path d="M1232.5 69V73.5M1230.8 71.8L1232.5 73.5L1234.2 71.8" fill="none" stroke="#3a73b8" stroke-width="1.1"/><rect x="1218" y="96" width="11" height="5" fill="#efc47c"/><path d="M1218 92.5H1229" stroke="#e8b460" stroke-dasharray="1 1.5"/><path d="M1218.5 91V87.5H1228.5V91" fill="none" stroke="#666"/><path d="M1232.5 98V93.5M1230.8 95.2L1232.5 93.5L1234.2 95.2" fill="none" stroke="#3a73b8" stroke-width="1.1"/><path d="M1219.5 109.5H1229.5L1232.5 112.5V123.5H1219.5Z" fill="#fff" stroke="#666"/><path d="M1221.5 109.5V123.5M1219.5 121.5H1232.5" stroke="#999" stroke-width=".8"/><path d="M1223 116.5H1229M1227 114.3L1229.2 116.5L1227 118.7" fill="none" stroke="#3a73b8" stroke-width="1.2"/><path d="M1297 68H1302L1299.5 65Z" fill="#666"/><path d="M1297 75H1302L1299.5 78Z" fill="#666"/><path d="M1297 91H1302L1299.5 88Z" fill="#666"/><path d="M1297 98H1302L1299.5 101Z" fill="#666"/><path d="M1351 74H1355.4L1358 77.4L1360.6 74H1365L1360.2 79.5L1365 85H1360.6L1358 81.6L1355.4 85H1351L1355.8 79.5Z" fill="#fff"/><path d="M1581.5 143.5L1585.5 139.5L1589.5 143.5" fill="none" stroke="#666" stroke-width="2"/></svg>

</body></html>
